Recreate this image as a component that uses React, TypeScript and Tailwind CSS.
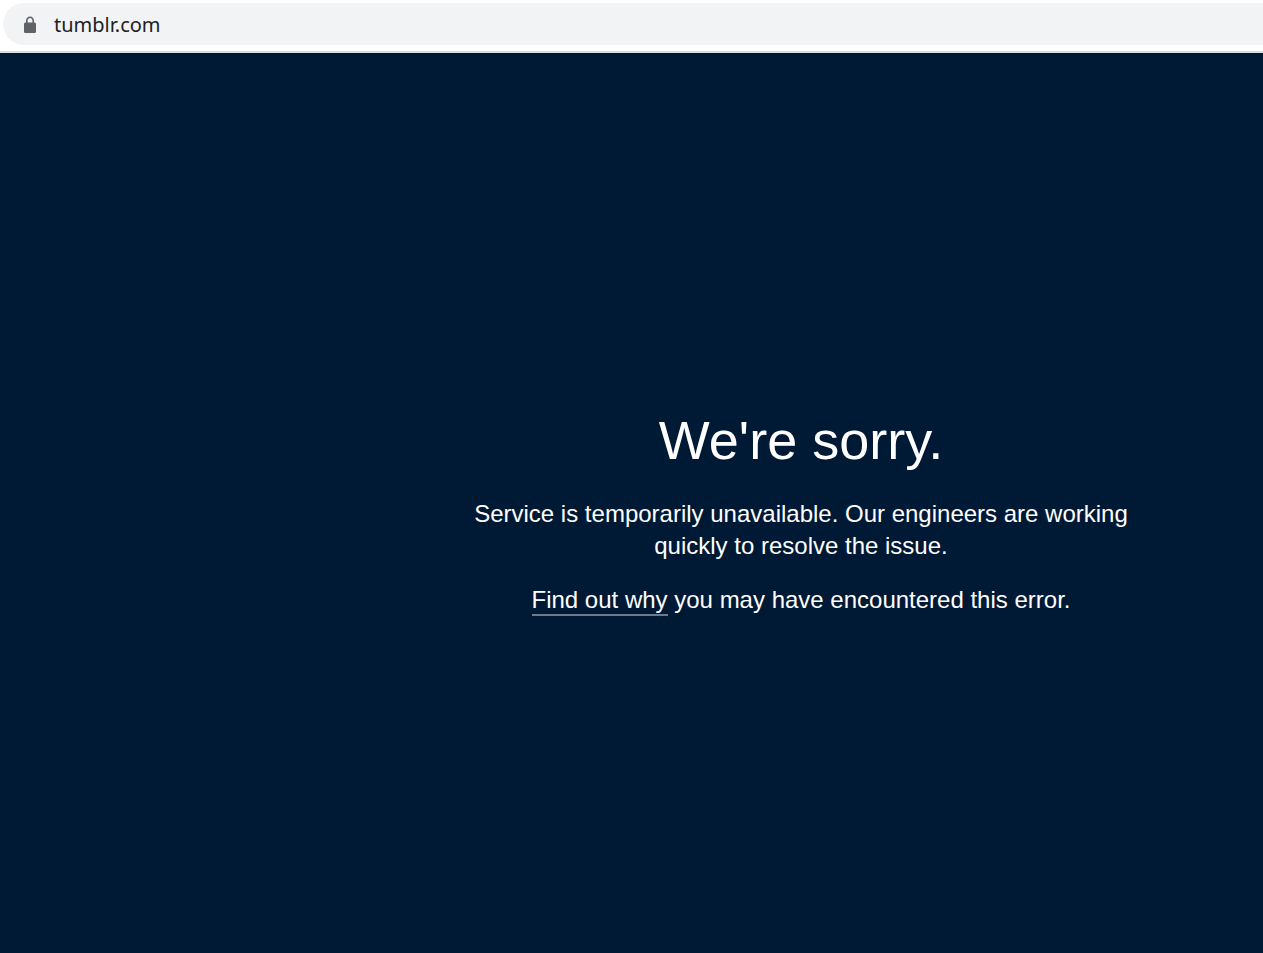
export default function App() {
  return (
    <div className="min-h-[953px] flex flex-col bg-[#001935] font-['Liberation_Sans',Arial,sans-serif]">
      {/* Address bar */}
      <div className="h-[53px] shrink-0 bg-white border-b-2 border-[#dadce0] pt-[3px] pl-[3px]">
        <div className="h-[42px] flex items-center bg-[#f1f3f4] rounded-l-[21px] pl-[21px]">
          <svg width="12" height="17" viewBox="0 0 12 17" className="mt-[1px] text-[#5f6368]" fill="currentColor">
            <path d="M2 6.500V4.500C2 2.300 3.800.5 6 .5s4 1.800 4 4v2h.4c.9 0 1.600.7 1.600 1.600v7.300c0 .9-.7 1.600-1.600 1.600H1.600C.7 17 0 16.300 0 15.400V8.100C0 7.200.7 6.500 1.600 6.500H2zm1.600 0h4.800v-2C8.400 3.200 7.300 2.100 6 2.100S3.600 3.200 3.600 4.500v2z" />
          </svg>
          <span className="ml-[18px] pt-[2px] text-[20px] text-[#202124] font-['Noto_Sans',sans-serif]">tumblr.com</span>
        </div>
      </div>

      {/* Error message */}
      <main className="flex-1 flex flex-col items-center pl-[339px] pt-[352px] text-white text-center">
        <h1 className="text-[54px] leading-[70px]">We're sorry.</h1>
        <p className="mt-[23px] w-[680px] text-[24px] leading-[32px]">
          Service is temporarily unavailable. Our engineers are working quickly to resolve the issue.
        </p>
        <p className="mt-[22px] text-[24px] leading-[32px]">
          <a href="#" className="border-b-2 border-[#6b7a8c] pb-[1px]">Find out why</a> you may have encountered this error.
        </p>
      </main>
    </div>
  );
}
